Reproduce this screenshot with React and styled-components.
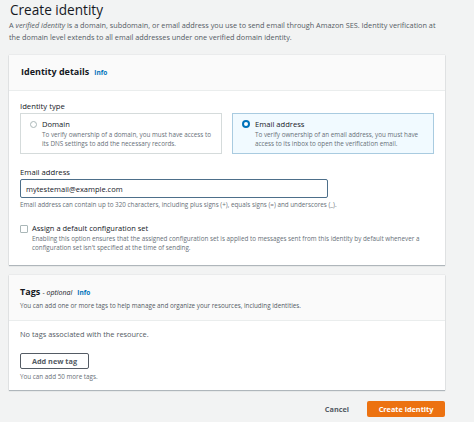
import React from "react";
import styled, { createGlobalStyle } from "styled-components";

const GlobalStyle = createGlobalStyle`
  html, body {
    margin: 0;
    padding: 0;
    background: #f2f3f3;
    font-family: "Open Sans", "Noto Sans", sans-serif;
    color: #16191f;
  }
`;

const Page = styled.div`
  width: 474px;
  height: 422px;
  overflow: hidden;
  box-sizing: border-box;
  padding: 0 29px 0 9px;
  display: flex;
  flex-direction: column;
`;

const Title = styled.h1`
  margin: 0 0 0 1px;
  font-size: 13.6px;
  line-height: 19px;
  font-weight: 400;
`;

const Lead = styled.p`
  margin: 0;
  font-size: 7.3px;
  line-height: 12px;
  color: #545b64;
  em {
    font-style: italic;
  }
`;

const Card = styled.section`
  background: #fff;
  margin-top: ${(p) => p.$top}px;
  box-shadow: 0 1px 1px rgba(0, 22, 40, 0.25), 0 0 1px rgba(0, 22, 40, 0.2);
`;

const CardHeader = styled.header`
  background: #fafafa;
  border-bottom: 1px solid #eaeded;
  padding: ${(p) => p.$pad};
`;

const HeaderTitle = styled.h2`
  margin: 0;
  font-size: 9px;
  line-height: 14px;
  font-weight: 700;
  display: flex;
  align-items: baseline;
  gap: 5px;
`;

const Optional = styled.span`
  font-size: 7px;
  font-weight: 400;
  font-style: italic;
`;

const Info = styled.a`
  font-size: 6.5px;
  font-weight: 700;
  color: #0073bb;
  text-decoration: none;
`;

const HeaderDesc = styled.p`
  margin: 1px 0 0;
  font-size: 6.3px;
  line-height: 9px;
  color: #545b64;
`;

const CardBody = styled.div`
  padding: ${(p) => p.$pad};
  display: flex;
  flex-direction: column;
`;

const Label = styled.div`
  font-size: 7.7px;
  line-height: 10px;
  color: #16191f;
  margin-bottom: 2px;
`;

const Tiles = styled.div`
  display: grid;
  grid-template-columns: 1fr 1fr;
  gap: 10px;
  margin-bottom: 13px;
`;

const Tile = styled.label`
  height: 41px;
  box-sizing: border-box;
  border: 1px solid ${(p) => (p.$checked ? "#a9cbe0" : "#d5dbdb")};
  background: ${(p) => (p.$checked ? "#f1faff" : "#fff")};
  padding: 4px 6px 0 9px;
  display: flex;
  gap: 5px;
`;

const Radio = styled.span`
  width: ${(p) => (p.$checked ? 8 : 7)}px;
  height: ${(p) => (p.$checked ? 8 : 7)}px;
  flex: none;
  border-radius: 50%;
  box-sizing: border-box;
  margin-top: ${(p) => (p.$checked ? 2 : 2.5)}px;
  border: ${(p) => (p.$checked ? "2.5px solid #0073bb" : "1px solid #aab7b8")};
  background: #fff;
`;

const TileText = styled.div`
  display: flex;
  flex-direction: column;
`;

const TileTitle = styled.span`
  font-size: 7.6px;
  line-height: 12px;
`;

const TileDesc = styled.span`
  font-size: 6.3px;
  line-height: 9px;
  color: #687078;
`;

const Input = styled.input`
  width: 308px;
  height: 19px;
  box-sizing: border-box;
  border: 1px solid #4d6f8a;
  border-radius: 2px;
  padding: 0 5px;
  font-family: inherit;
  font-size: 7.5px;
  color: #16191f;
  outline: none;
`;

const Hint = styled.div`
  font-size: 6.3px;
  line-height: 9px;
  color: #687078;
  margin-top: ${(p) => p.$top}px;
`;

const CheckRow = styled.div`
  display: flex;
  gap: 4px;
  margin-top: 13.5px;
`;

const Checkbox = styled.span`
  width: 8px;
  height: 8px;
  box-sizing: border-box;
  flex: none;
  margin-top: 2px;
  border: 1px solid #aab7b8;
  border-radius: 1px;
  background: #fff;
`;

const CheckTitle = styled.span`
  font-size: 7.5px;
  line-height: 11px;
`;

const Plain = styled.div`
  font-size: 7.4px;
  line-height: 11px;
  color: #545b64;
`;

const OutlineButton = styled.button`
  align-self: flex-start;
  width: 69px;
  height: 16px;
  margin-top: 12.5px;
  border: 1px solid #545b64;
  border-radius: 2px;
  background: #fff;
  font-family: inherit;
  font-size: 7.3px;
  font-weight: 700;
  color: #545b64;
  padding: 0;
`;

const Footer = styled.div`
  display: flex;
  justify-content: flex-end;
  align-items: center;
  gap: 18px;
  margin-top: 11px;
`;

const LinkButton = styled.button`
  border: 0;
  background: none;
  font-family: inherit;
  font-size: 7.3px;
  font-weight: 700;
  color: #545b64;
  padding: 0;
`;

const PrimaryButton = styled.button`
  width: 78px;
  height: 16px;
  border: 0;
  border-radius: 2px;
  background: #ec7211;
  color: #fff;
  font-family: inherit;
  font-size: 7.3px;
  font-weight: 700;
  padding: 0;
`;

export default function App() {
  return (
    <>
      <GlobalStyle />
      <Page>
        <Title>Create identity</Title>
        <Lead>
          A <em>verified identity</em> is a domain, subdomain, or email address you use to send email
          through Amazon SES. Identity verification at the domain level extends to all email addresses
          under one verified domain identity.
        </Lead>

        <Card $top={12}>
          <CardHeader $pad="10px 12px 10px">
            <HeaderTitle>
              Identity details <Info>Info</Info>
            </HeaderTitle>
          </CardHeader>
          <CardBody $pad="10px 11px 13px">
            <Label>Identity type</Label>
            <Tiles>
              <Tile>
                <Radio />
                <TileText>
                  <TileTitle>Domain</TileTitle>
                  <TileDesc>
                    To verify ownership of a domain, you must have access to its DNS settings to add
                    the necessary records.
                  </TileDesc>
                </TileText>
              </Tile>
              <Tile $checked>
                <Radio $checked />
                <TileText>
                  <TileTitle>Email address</TileTitle>
                  <TileDesc>
                    To verify ownership of an email address, you must have access to its inbox to open
                    the verification email.
                  </TileDesc>
                </TileText>
              </Tile>
            </Tiles>
            <Label>Email address</Label>
            <Input defaultValue="mytestemail@example.com" />
            <Hint $top={2}>
              Email address can contain up to 320 characters, including plus signs (+), equals signs
              (=) and underscores (_).
            </Hint>
            <CheckRow>
              <Checkbox />
              <TileText>
                <CheckTitle>Assign a default configuration set</CheckTitle>
                <TileDesc>
                  Enabling this option ensures that the assigned configuration set is applied to
                  messages sent from this identity by default whenever a configuration set isn't
                  specified at the time of sending.
                </TileDesc>
              </TileText>
            </CheckRow>
          </CardBody>
        </Card>

        <Card $top={10}>
          <CardHeader $pad="10px 11px 10px">
            <HeaderTitle>
              <span>
                Tags <Optional>- optional</Optional>
              </span>
              <Info>Info</Info>
            </HeaderTitle>
            <HeaderDesc>
              You can add one or more tags to help manage and organize your resources, including
              identities.
            </HeaderDesc>
          </CardHeader>
          <CardBody $pad="8.5px 11px 9px">
            <Plain>No tags associated with the resource.</Plain>
            <OutlineButton>Add new tag</OutlineButton>
            <Hint $top={3}>You can add 50 more tags.</Hint>
          </CardBody>
        </Card>

        <Footer>
          <LinkButton>Cancel</LinkButton>
          <PrimaryButton>Create identity</PrimaryButton>
        </Footer>
      </Page>
    </>
  );
}
